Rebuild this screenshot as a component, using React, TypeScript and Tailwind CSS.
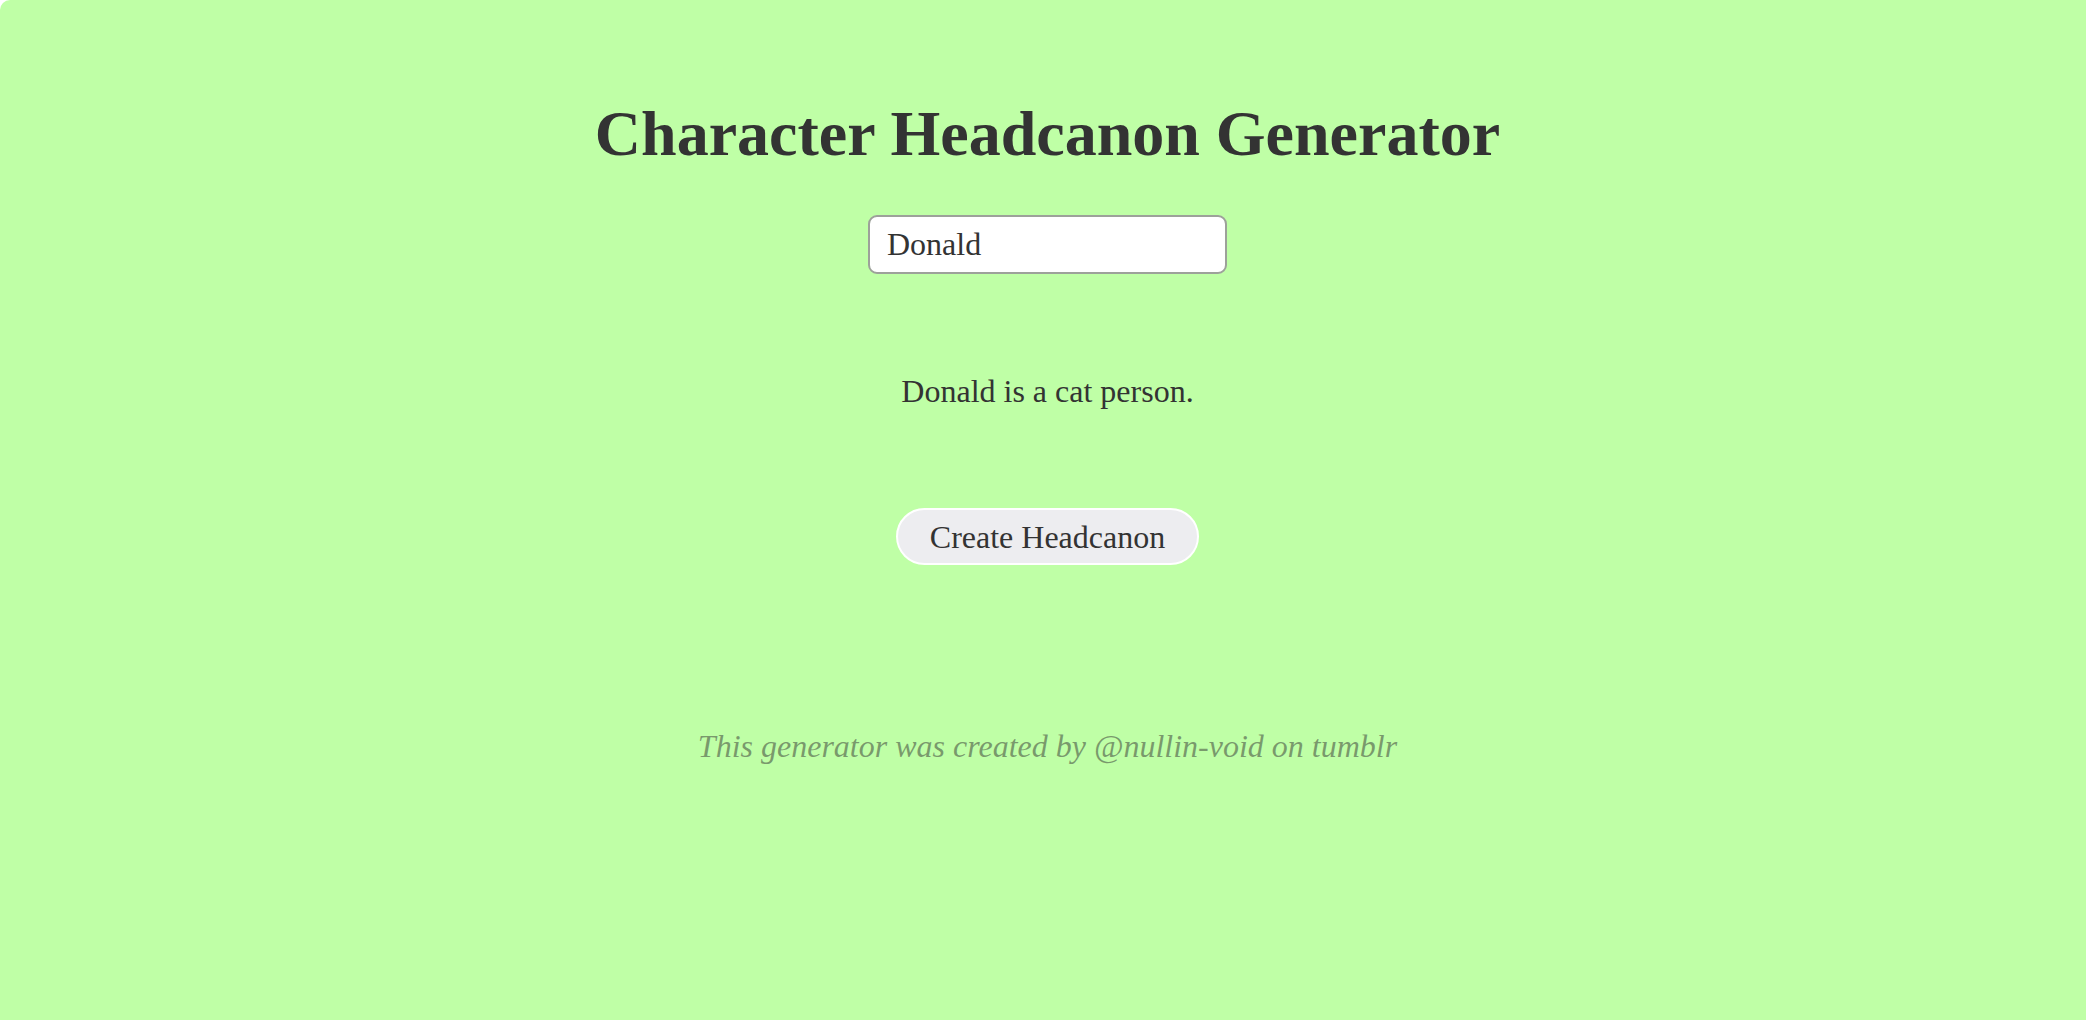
import React, { useState } from "react";

const serif = { fontFamily: '"Liberation Serif", "Times New Roman", serif' };

const endings = ["is a cat person."];

export default function App() {
  const [name, setName] = useState("Donald");
  const [line] = useState(endings[0]);

  return (
    <div className="bg-white min-h-[1020px]">
      <div
        className="min-h-[1020px] bg-[#bfffa6] rounded-tl-[10px] pl-[9px] flex flex-col items-center text-[#333333]"
        style={serif}
      >
        <h1 className="mt-[102px] text-[64px] leading-[64px] font-bold">
          Character Headcanon Generator
        </h1>

        <input
          value={name}
          onChange={(e) => setName(e.target.value)}
          className="mt-[49px] w-[359px] h-[59px] bg-white border-2 border-[#9da19a] rounded-[9px] px-[17px] text-[32px] text-[#333333] outline-none"
          style={serif}
        />

        <p className="mt-[101px] text-[32px] leading-[32px]">
          {name} {line}
        </p>

        <button
          className="mt-[101px] h-[57px] px-[32px] rounded-full bg-[#ededf0] border-2 border-white text-[32px] leading-[32px] text-[#333333]"
          style={serif}
        >
          Create Headcanon
        </button>

        <p className="mt-[165px] text-[32px] leading-[32px] italic text-[#333333]/50">
          This generator was created by @nullin-void on tumblr
        </p>
      </div>
    </div>
  );
}
